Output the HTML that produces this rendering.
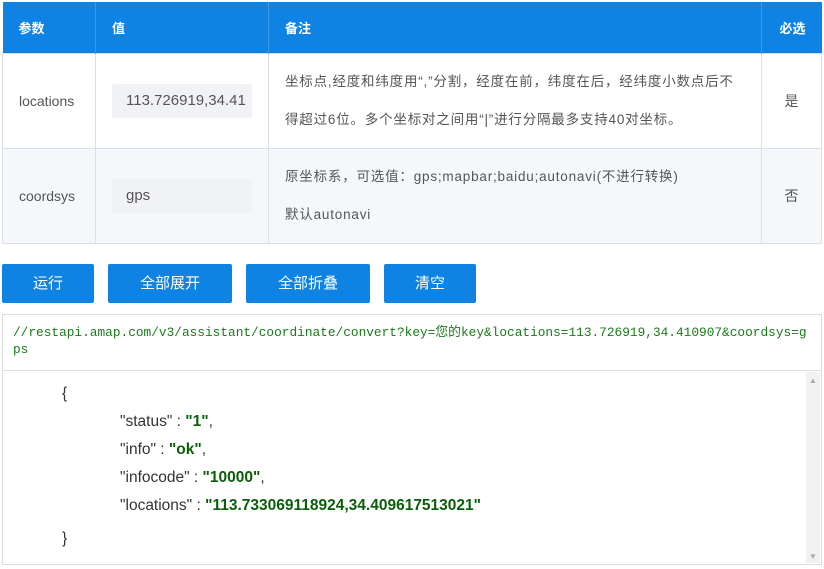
<!DOCTYPE html>
<html><head><meta charset="utf-8"><style>
*{margin:0;padding:0;box-sizing:border-box}
body{width:824px;height:569px;background:#fff;font-family:"Liberation Sans","Noto Sans CJK SC",sans-serif;color:#555;position:relative;overflow:hidden}
table{position:absolute;left:2px;top:2px;width:820px;border-collapse:collapse;font-size:14px;table-layout:fixed}
th{background:#0e83e3;color:#fff;font-weight:bold;font-size:13px;text-align:left;height:51px;padding-left:16px;border-right:1px solid #3c9cec}
td{border:1px solid #dcdfe6;padding:0 16px}
.c{text-align:center}
.inp{background:#f0f2f5;height:34px;line-height:34px;padding-left:14px;font-size:15px;color:#555;border-radius:2px;white-space:nowrap;overflow:hidden}
.n{font-size:13.5px;line-height:38px;color:#555;white-space:nowrap;letter-spacing:0.8px}
.btn{position:absolute;top:264px;height:39px;background:#0e83e3;color:#fff;font-size:15px;text-align:center;line-height:39px;border-radius:2px}
.box{position:absolute;left:2px;top:314px;width:820px;height:251px;border:1px solid #ddd}
.url{height:56px;border-bottom:1px solid #ddd;font-family:"Liberation Mono","Noto Sans CJK SC",monospace;font-size:12.8px;color:#1a7a1a;padding:9px 0 0 10px;line-height:17px;white-space:nowrap}
.sb{position:absolute;right:1px;top:57px;width:14px;bottom:1px;background:#f1f1f1;font-size:8px;color:#aaa;text-align:center}
.j{position:absolute;font-size:15.5px;color:#333}
.j b{color:#0a5e0a}
</style></head><body>
<table>
<tr><th style="width:93px">参数</th><th style="width:173px">值</th><th style="width:493px">备注</th><th style="border-right:none;text-align:right;padding-right:16px">必选</th></tr>
<tr style="height:95px"><td>locations</td><td><div class="inp">113.726919,34.41</div></td><td class="n">坐标点,经度和纬度用“,”分割，经度在前，纬度在后，经纬度小数点后不<br>得超过6位。多个坐标对之间用“|”进行分隔最多支持40对坐标。</td><td class="c">是</td></tr>
<tr style="height:95px;background:#f5f8fb"><td>coordsys</td><td><div class="inp">gps</div></td><td class="n">原坐标系，可选值：gps;mapbar;baidu;autonavi(不进行转换)<br>默认autonavi</td><td class="c">否</td></tr>
</table>
<div class="btn" style="left:2px;width:92px">运行</div>
<div class="btn" style="left:108px;width:124px">全部展开</div>
<div class="btn" style="left:246px;width:124px">全部折叠</div>
<div class="btn" style="left:384px;width:92px">清空</div>
<div class="box">
<div class="url">//restapi.amap.com/v3/assistant/coordinate/convert?key=您的key&amp;locations=113.726919,34.410907&amp;coordsys=g<br>ps</div>
<div class="sb"><div style="margin-top:4px">▲</div><div style="position:absolute;bottom:2px;width:14px">▼</div></div>
</div>
<div class="j" style="left:62px;top:385px">{</div>
<div class="j" style="left:120px;top:413px">"status" : <b>"1"</b>,</div>
<div class="j" style="left:120px;top:441px">"info" : <b>"ok"</b>,</div>
<div class="j" style="left:120px;top:469px">"infocode" : <b>"10000"</b>,</div>
<div class="j" style="left:120px;top:497px">"locations" : <b>"113.733069118924,34.409617513021"</b></div>
<div class="j" style="left:62px;top:530px">}</div>
</body></html>
